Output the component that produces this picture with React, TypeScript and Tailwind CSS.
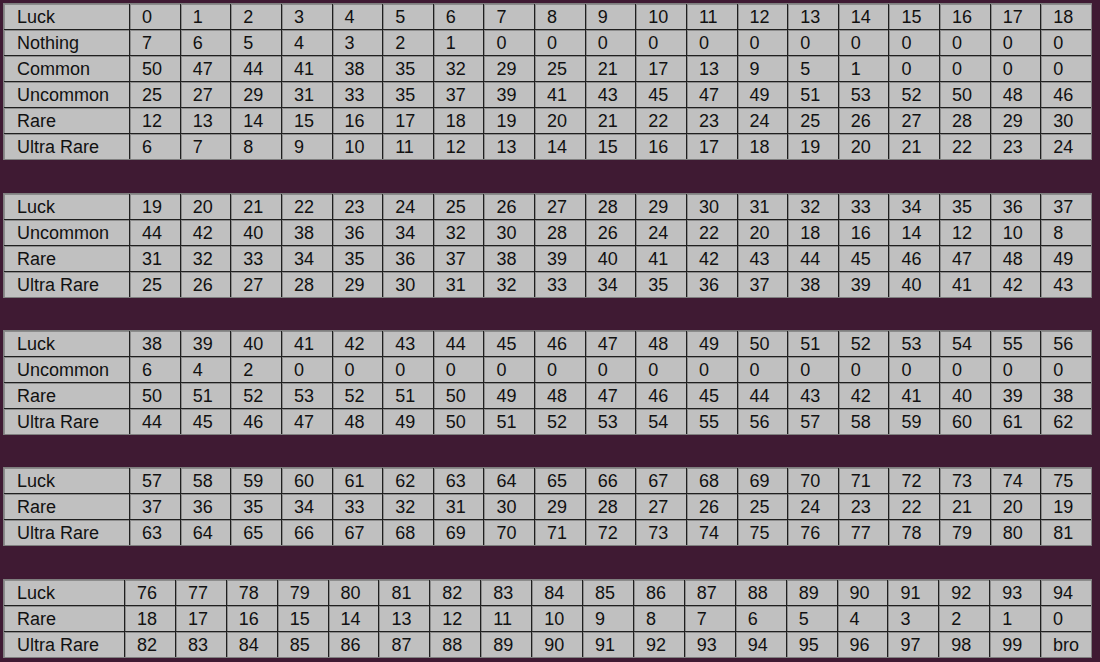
import { Fragment } from "react";

const range = (from: number, to: number) =>
  Array.from({ length: to - from + 1 }, (_, i) => String(from + i));

type Row = { label: string; values: string[] };
type Block = { rows: Row[]; first: string; mt: string };

const blocks: Block[] = [
  {
    first: "grid-cols-[125px_repeat(19,minmax(0,1fr))]",
    mt: "",
    rows: [
      { label: "Luck", values: range(0, 18) },
      { label: "Nothing", values: ["7", "6", "5", "4", "3", "2", "1", ...Array(12).fill("0")] },
      {
        label: "Common",
        values: ["50", "47", "44", "41", "38", "35", "32", "29", "25", "21", "17", "13", "9", "5", "1", "0", "0", "0", "0"],
      },
      {
        label: "Uncommon",
        values: ["25", "27", "29", "31", "33", "35", "37", "39", "41", "43", "45", "47", "49", "51", "53", "52", "50", "48", "46"],
      },
      { label: "Rare", values: range(12, 30) },
      { label: "Ultra Rare", values: range(6, 24) },
    ],
  },
  {
    first: "grid-cols-[125px_repeat(19,minmax(0,1fr))]",
    mt: "mt-[33px]",
    rows: [
      { label: "Luck", values: range(19, 37) },
      { label: "Uncommon", values: range(0, 18).map((i) => String(44 - 2 * Number(i))) },
      { label: "Rare", values: range(31, 49) },
      { label: "Ultra Rare", values: range(25, 43) },
    ],
  },
  {
    first: "grid-cols-[125px_repeat(19,minmax(0,1fr))]",
    mt: "mt-[32px]",
    rows: [
      { label: "Luck", values: range(38, 56) },
      { label: "Uncommon", values: ["6", "4", "2", ...Array(16).fill("0")] },
      {
        label: "Rare",
        values: ["50", "51", "52", "53", "52", "51", "50", "49", "48", "47", "46", "45", "44", "43", "42", "41", "40", "39", "38"],
      },
      { label: "Ultra Rare", values: range(44, 62) },
    ],
  },
  {
    first: "grid-cols-[125px_repeat(19,minmax(0,1fr))]",
    mt: "mt-[32px]",
    rows: [
      { label: "Luck", values: range(57, 75) },
      { label: "Rare", values: range(0, 18).map((i) => String(37 - Number(i))) },
      { label: "Ultra Rare", values: range(63, 81) },
    ],
  },
  {
    first: "grid-cols-[120px_repeat(19,minmax(0,1fr))]",
    mt: "mt-[33px]",
    rows: [
      { label: "Luck", values: range(76, 94) },
      { label: "Rare", values: range(0, 18).map((i) => String(18 - Number(i))) },
      { label: "Ultra Rare", values: [...range(82, 99), "bro"] },
    ],
  },
];

function Cell({ text, label }: { text: string; label?: boolean }) {
  return (
    <div
      className={`flex h-[25px] items-center bg-[#c0c0c0] shadow-[inset_1px_1px_0_#8c8c8c] ${
        label ? "pl-[13px]" : "pl-[12px]"
      }`}
    >
      {text}
    </div>
  );
}

export default function App() {
  return (
    <div
      className="flex min-h-[662px] w-[1100px] flex-col bg-[#3f1a33] px-[3px] pt-[3px] text-[18px] leading-none text-[#111]"
      style={{ fontFamily: '"Liberation Sans", Arial, sans-serif' }}
    >
      {blocks.map((block, b) => (
        <div
          key={b}
          className={`grid w-[1089px] gap-px border border-[#7f7f7f] bg-[#1f1f1f] ${block.first} ${block.mt}`}
        >
          {block.rows.map((row) => (
            <Fragment key={row.label}>
              <Cell text={row.label} label />
              {row.values.map((v, i) => (
                <Cell key={i} text={v} />
              ))}
            </Fragment>
          ))}
        </div>
      ))}
    </div>
  );
}
